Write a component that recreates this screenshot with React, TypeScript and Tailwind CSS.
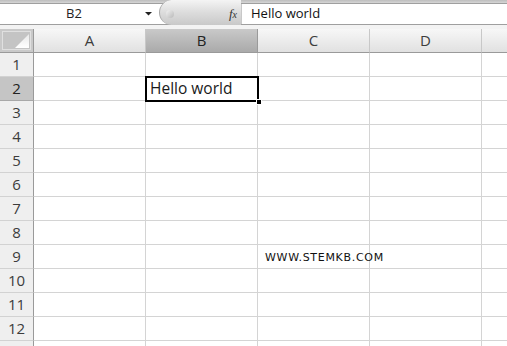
import React from 'react'

const cols = ['A', 'B', 'C', 'D', '']
const rows = [1, 2, 3, 4, 5, 6, 7, 8, 9, 10, 11, 12]

export default function App() {
  return (
    <div className="w-[507px] h-[346px] overflow-hidden bg-white" style={{ fontFamily: '"Open Sans", "Noto Sans", sans-serif' }}>
      {/* formula bar */}
      <div className="h-[3px] bg-gradient-to-b from-[#bdbdbd] to-[#d6d6d6]" />
      <div className="flex h-[22px] border-t border-b border-[#9f9f9f] bg-white">
        <div className="flex w-[159px] items-center">
          <div className="flex-1 pl-[3px] text-center text-[13px] text-[#222]">B2</div>
          <svg width="8" height="4" viewBox="0 0 8 4" className="mr-[6px]">
            <path d="M0 0 H7 L3.5 3.5 Z" fill="#222" />
          </svg>
        </div>
        <div className="relative -mt-[4px] flex h-[25px] w-[82px] items-center rounded-l-full bg-gradient-to-b from-[#f4f4f4] via-[#dcdcdc] to-[#c9c9c9] border-l border-[#a8a8a8]">
          <div className="ml-[6px] mt-[2px] h-[8px] w-[8px] rounded-full bg-gradient-to-br from-[#f2f2f2] to-[#b9b9b9]" />
          <span className="ml-auto mr-[4px] mt-[3px] italic text-[13px] text-[#333]" style={{ fontFamily: '"Liberation Serif", serif' }}>
            f<span className="text-[10px]">x</span>
          </span>
        </div>
        <div className="flex flex-1 items-center border-l border-[#c8c8c8] pl-[9px] text-[13px] text-[#111]">Hello world</div>
      </div>
      <div className="h-[4px] bg-[#f3f3f3]" />

      {/* grid */}
      <div className="grid grid-cols-[34px_112px_112px_112px_112px_26px] auto-rows-[24px]">
        <div className="relative border-r border-b border-[#9a9a9a] bg-[#c9c9c9]">
          <div className="absolute inset-[2px] border border-[#e0e0e0] bg-[#c4c4c4]" />
          <svg className="absolute right-[4px] bottom-[4px]" width="14" height="14" viewBox="0 0 14 14">
            <defs>
              <linearGradient id="tri" x1="0" y1="0" x2="0" y2="1">
                <stop offset="0" stopColor="#e8e8e8" />
                <stop offset="1" stopColor="#ffffff" />
              </linearGradient>
            </defs>
            <path d="M14 0 V14 H0 Z" fill="url(#tri)" />
          </svg>
        </div>
        {cols.map((c, i) => (
          <div
            key={i}
            className={`flex items-center justify-center border-r border-b text-[15px] ${c === 'B' ? 'bg-gradient-to-b from-[#c9c9c9] to-[#aaaaaa] border-[#9a9a9a] text-[#222]' : 'bg-gradient-to-b from-[#f7f7f7] via-[#ececec] to-[#e1e1e1] border-r-[#c8c8c8] border-b-[#9a9a9a] text-[#3c3c3c]'}`}
          >
            {c}
          </div>
        ))}
        {rows.map((r) => (
          <React.Fragment key={r}>
            <div className={`flex items-center justify-center border-r border-b text-[15px] ${r === 2 ? 'bg-[#c5c5c5] border-r-[#9a9a9a] border-b-[#a8a8a8] text-[#222]' : 'bg-[#efefef] border-r-[#9a9a9a] border-b-[#d2d2d2] text-[#3c3c3c]'}`}>
              {r}
            </div>
            {cols.map((c, i) => (
              <div key={i} className="relative border-r border-b border-[#d4d4d4]">
                {r === 2 && c === 'B' && (
                  <div className="absolute -left-[1px] -top-[1px] z-10 h-[26px] w-[114px] border-[2.5px] border-[#000] pl-[3px] text-[15.5px] leading-[20px] text-[#1a1a1a]">
                    Hello world
                    <div className="absolute -right-[5px] -bottom-[5px] h-[6px] w-[6px] border border-white bg-[#000]" />
                  </div>
                )}
                {r === 9 && c === 'C' && (
                  <div className="absolute left-[7px] top-[5px] z-10 whitespace-nowrap text-[11px] tracking-[0.7px] text-[#111]" style={{ fontFamily: '"DejaVu Sans", sans-serif' }}>
                    WWW.STEMKB.COM
                  </div>
                )}
              </div>
            ))}
          </React.Fragment>
        ))}
        <div className="bg-[#efefef] border-r border-[#9a9a9a]" />
        {cols.map((c, i) => (
          <div key={i} className="border-r border-[#d4d4d4]" />
        ))}
      </div>
    </div>
  )
}
